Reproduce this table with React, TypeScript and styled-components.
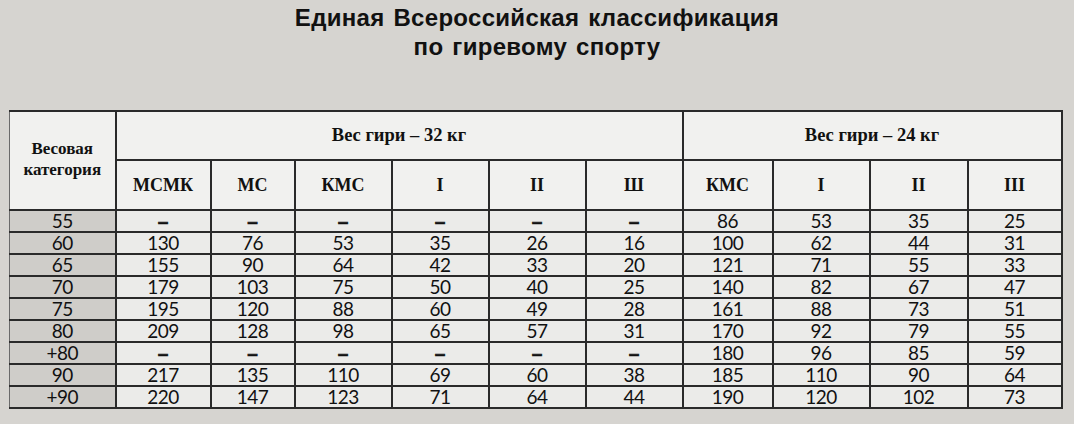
import React from "react";
import styled, { createGlobalStyle } from "styled-components";

const Global = createGlobalStyle`
  html, body { margin: 0; padding: 0; }
  body {
    background: #d6d4d0;
    width: 1074px;
    height: 424px;
    overflow: hidden;
    font-family: "Liberation Sans", Arial, sans-serif;
  }
`;

const Page = styled.div`
  display: flex;
  flex-direction: column;
  align-items: center;
  padding-top: 3px;
  width: 1074px;
`;

const Title = styled.h1`
  margin: 0;
  font-family: "Liberation Sans", Arial, sans-serif;
  font-weight: 700;
  font-size: 24px;
  line-height: 29px;
  letter-spacing: 0.3px;
  word-spacing: 2px;
  color: #111;
  text-align: center;
`;

const TableWrap = styled.div`
  align-self: flex-start;
  margin: 49px 0 0 9px;
`;

const Table = styled.table`
  border-collapse: collapse;
  table-layout: fixed;
  width: 1052px;
  border-top: 2px solid #2a2a2a;
  border-right: 2px solid #2a2a2a;
  border-bottom: 2px solid #2a2a2a;
  border-left: 1px solid #6a6a6a;
  background: #efefed;
  color: #111;
`;

const HeadRow = styled.tr<{ $h: number }>`
  height: ${(p) => p.$h}px;
`;

const DataRow = styled.tr`
  height: 22px;
`;

const HeadCell = styled.th`
  border: 2px solid #2a2a2a;
  font-family: "Liberation Serif", "Times New Roman", serif;
  font-weight: 700;
  font-size: 18.5px;
  line-height: 21px;
  text-align: center;
  vertical-align: middle;
  background: #f1f1ef;
  padding: 0;
`;

const CornerCell = styled(HeadCell)`
  border-left: 1px solid #6a6a6a;
  font-size: 17px;
  padding-bottom: 4px;
`;

const SubHeadCell = styled(HeadCell)`
  font-size: 18px;
`;

const CatCell = styled.td`
  border: 2px solid #2a2a2a;
  border-left: 1px solid #6a6a6a;
  background: #cfcdc9;
  font-family: Lato, "Open Sans", sans-serif;
  font-size: 19px;
  letter-spacing: -0.6px;
  line-height: 18px;
  text-align: center;
  padding: 0;
`;

const DataCell = styled.td`
  border: 2px solid #2a2a2a;
  background: #ebebe9;
  font-family: Lato, "Open Sans", sans-serif;
  font-size: 19px;
  letter-spacing: -0.6px;
  line-height: 18px;
  text-align: center;
  padding: 0;
`;

const Dash = styled.span`
  font-family: "Liberation Sans", Arial, sans-serif;
  font-weight: 900;
  font-size: 19px;
  letter-spacing: 0;
  -webkit-text-stroke: 0.6px #111;
  color: #111;
`;

const widths = [106, 95, 84, 97, 97, 97, 97, 90, 97, 98, 94];

const sub32 = ["МСМК", "МС", "КМС", "I", "II", "Ш"];
const sub24 = ["КМС", "I", "II", "III"];

const D = "–";
const rows: [string, string[]][] = [
  ["55", [D, D, D, D, D, D, "86", "53", "35", "25"]],
  ["60", ["130", "76", "53", "35", "26", "16", "100", "62", "44", "31"]],
  ["65", ["155", "90", "64", "42", "33", "20", "121", "71", "55", "33"]],
  ["70", ["179", "103", "75", "50", "40", "25", "140", "82", "67", "47"]],
  ["75", ["195", "120", "88", "60", "49", "28", "161", "88", "73", "51"]],
  ["80", ["209", "128", "98", "65", "57", "31", "170", "92", "79", "55"]],
  ["+80", [D, D, D, D, D, D, "180", "96", "85", "59"]],
  ["90", ["217", "135", "110", "69", "60", "38", "185", "110", "90", "64"]],
  ["+90", ["220", "147", "123", "71", "64", "44", "190", "120", "102", "73"]],
];

export default function App() {
  return (
    <>
      <Global />
      <Page>
        <Title>
          Единая Всероссийская классификация
          <br />
          по гиревому спорту
        </Title>
        <TableWrap>
          <Table>
            <colgroup>
              {widths.map((w, i) => (
                <col key={i} style={{ width: w }} />
              ))}
            </colgroup>
            <thead>
              <HeadRow $h={49}>
                <CornerCell rowSpan={2}>
                  Весовая
                  <br />
                  категория
                </CornerCell>
                <HeadCell colSpan={6}>Вес гири – 32 кг</HeadCell>
                <HeadCell colSpan={4}>Вес гири – 24 кг</HeadCell>
              </HeadRow>
              <HeadRow $h={50}>
                {sub32.map((s, i) => (
                  <SubHeadCell key={"a" + i}>{s}</SubHeadCell>
                ))}
                {sub24.map((s, i) => (
                  <SubHeadCell key={"b" + i}>{s}</SubHeadCell>
                ))}
              </HeadRow>
            </thead>
            <tbody>
              {rows.map(([cat, vals]) => (
                <DataRow key={cat}>
                  <CatCell>{cat}</CatCell>
                  {vals.map((v, i) => (
                    <DataCell key={i}>{v === D ? <Dash>{D}</Dash> : v}</DataCell>
                  ))}
                </DataRow>
              ))}
            </tbody>
          </Table>
        </TableWrap>
      </Page>
    </>
  );
}
